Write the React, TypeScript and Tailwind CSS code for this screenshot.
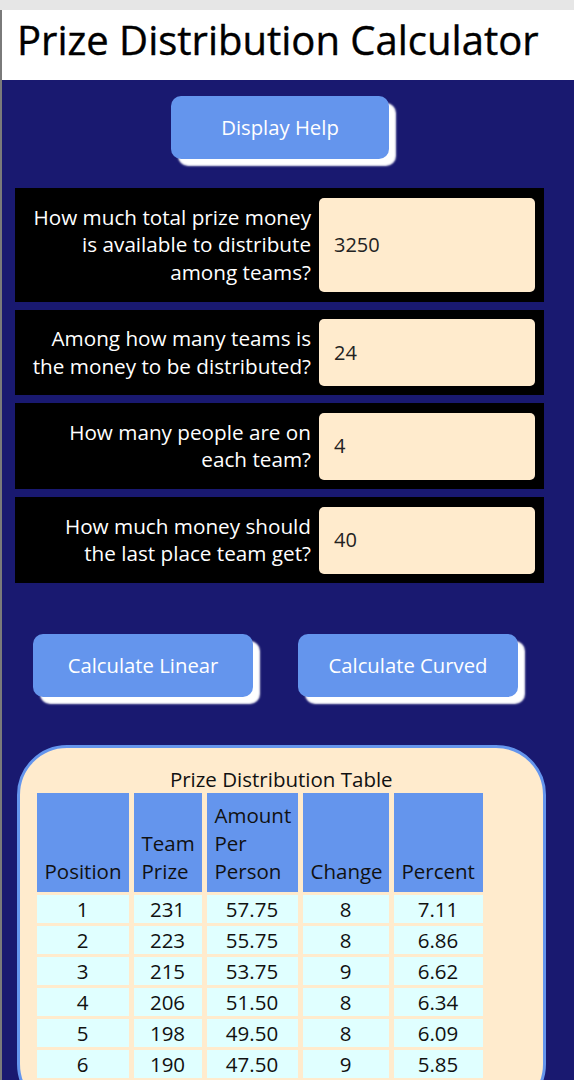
import React from "react";

const rows: [string, string, string, string, string][] = [
  ["1", "231", "57.75", "8", "7.11"],
  ["2", "223", "55.75", "8", "6.86"],
  ["3", "215", "53.75", "9", "6.62"],
  ["4", "206", "51.50", "8", "6.34"],
  ["5", "198", "49.50", "8", "6.09"],
  ["6", "190", "47.50", "9", "5.85"],
];

function Panel({
  lines,
  value,
  h,
  py,
}: {
  lines: string[];
  value: string;
  h: string;
  py: string;
}) {
  return (
    <div className={`ml-[13px] flex w-[529px] bg-black ${h}`}>
      <div className="flex w-[296px] flex-col items-end justify-center text-right text-[20.7px] leading-[27.5px] text-white">
        {lines.map((l) => (
          <span key={l} className="whitespace-nowrap">
            {l}
          </span>
        ))}
      </div>
      <div className={`ml-[8px] flex w-[216px] items-center rounded-[5px] bg-[#FFEBCD] pl-[15px] text-[20px] text-[#222] ${py}`}>
        {value}
      </div>
    </div>
  );
}

export default function App() {
  return (
    <div
      className="min-h-[1080px] w-[574px] bg-[#e6e6e6] pt-[10px]"
      style={{ fontFamily: '"Open Sans", "Noto Sans", sans-serif' }}
    >
      <div className="border-l-2 border-[#7a7a7a]">
        <div className="flex h-[70px] items-center bg-white pb-[10px] pl-[15px] text-[40px] text-black [-webkit-text-stroke:0.4px_#000]">
          Prize Distribution Calculator
        </div>
        <div className="bg-[#191970] pb-[40px] pt-[16px]">
          <div className="pl-[169px]">
            <button className="h-[63px] w-[218px] rounded-[10px] bg-[#6495ED] text-[20.3px] text-white shadow-[7px_7px_2px_#ffffff]">
              Display Help
            </button>
          </div>
          <div className="mt-[29px] flex flex-col gap-[8px]">
            <Panel
              lines={["How much total prize money", "is available to distribute", "among teams?"]}
              value="3250"
              h="h-[114px]"
              py="my-[10px]"
            />
            <Panel
              lines={["Among how many teams is", "the money to be distributed?"]}
              value="24"
              h="h-[85px]"
              py="my-[9px]"
            />
            <Panel
              lines={["How many people are on", "each team?"]}
              value="4"
              h="h-[86px]"
              py="my-[9.5px]"
            />
            <Panel
              lines={["How much money should", "the last place team get?"]}
              value="40"
              h="h-[86px]"
              py="my-[9.5px]"
            />
          </div>
          <div className="mt-[51px] flex gap-[45px] pl-[31px]">
            <button className="h-[63px] w-[220px] rounded-[10px] bg-[#6495ED] text-[20.3px] text-white shadow-[7px_7px_2px_#ffffff]">
              Calculate Linear
            </button>
            <button className="h-[63px] w-[220px] rounded-[10px] bg-[#6495ED] text-[20.3px] text-white shadow-[7px_7px_2px_#ffffff]">
              Calculate Curved
            </button>
          </div>
          <div className="ml-[15px] mt-[48px] w-[529px] rounded-[50px] border-[3px] border-[#6495ED] bg-[#FFEBCD] pb-[30px] pl-[11.5px] pt-[19.5px]">
            <div className="pr-[12px] text-center text-[20.5px] leading-[22px] text-[#111]">
              Prize Distribution Table
            </div>
            <table className="border-separate border-spacing-x-[5px] border-spacing-y-[3.6px] text-[20.5px] text-[#111]">
              <thead>
                <tr>
                  {[
                    ["Position", "w-[92px]"],
                    ["Team Prize", "w-[68px]"],
                    ["Amount Per Person", "w-[91px]"],
                    ["Change", "w-[86px]"],
                    ["Percent", "w-[89px]"],
                  ].map(([t, w]) => (
                    <th
                      key={t}
                      className={`${w} h-[99px] bg-[#6495ED] pb-[7px] pl-[8px] pr-[4px] pt-[8px] text-left align-bottom font-normal leading-[28px]`}
                    >
                      {t}
                    </th>
                  ))}
                </tr>
              </thead>
              <tbody>
                {rows.map((r) => (
                  <tr key={r[0]}>
                    {r.map((c, i) => (
                      <td key={i} className="h-[28px] bg-[#E0FFFF] p-0 text-center leading-[28px]">
                        {c}
                      </td>
                    ))}
                  </tr>
                ))}
              </tbody>
            </table>
          </div>
        </div>
      </div>
    </div>
  );
}
